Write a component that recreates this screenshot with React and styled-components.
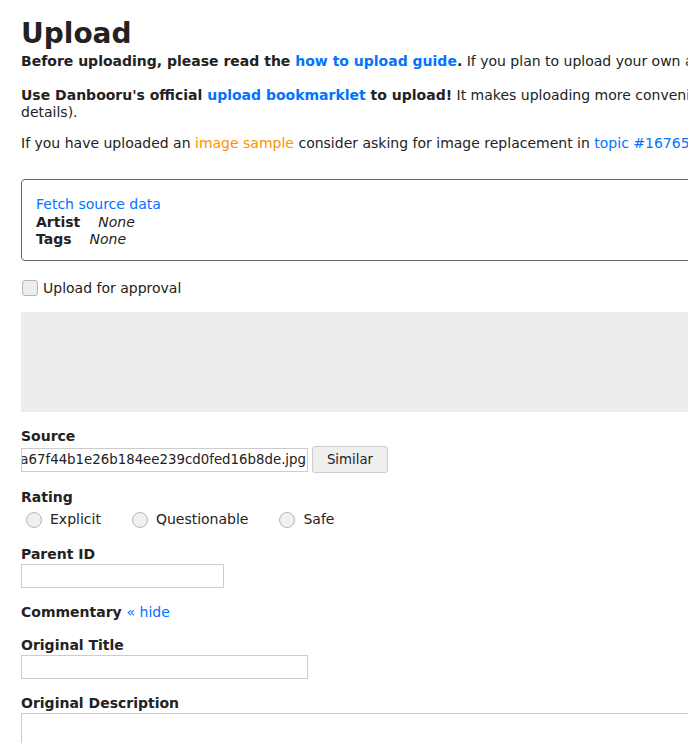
import styled, { createGlobalStyle } from "styled-components";

const GlobalStyle = createGlobalStyle`
    html, body {
        margin: 0;
        padding: 0;
        overflow: hidden;
        background: #fff;
    }
    body {
        font-family: "DejaVu Sans", Verdana, sans-serif;
        font-size: 14px;
        line-height: 18px;
        color: #222;
    }
`

const Page = styled.div`
    width: 1400px;
    padding: 0 21px 40px;
`

const Title = styled.h1`
    font-size: 28px;
    line-height: 34px;
    font-weight: bold;
    margin: 17px 0 0;
    color: #222;
`

const Notice = styled.p`
    margin: ${(props) => props.$top}px 0 0;
    line-height: 17px;
    white-space: nowrap;
`

const Link = styled.a`
    color: ${(props) => (props.$orange ? "#fd9200" : "#0073ff")};
    text-decoration: none;
    cursor: pointer;
`

const SourceBox = styled.div`
    margin-top: 27px;
    border: 1px solid #666;
    border-radius: 4px;
    height: 82px;
    padding: 16px 14px 0;
    box-sizing: border-box;
    line-height: 17.5px;
`

const MetaRow = styled.div`
    display: flex;
    gap: 18px;
`

const CheckRow = styled.label`
    display: flex;
    align-items: center;
    gap: 5px;
    height: 18px;
    margin-top: 18px;
`

const Check = styled.span`
    width: 14px;
    height: 14px;
    border: 1px solid #b5b5b5;
    border-radius: 3px;
    background: #ececec;
    margin-left: 1px;
`

const Preview = styled.div`
    margin-top: 15px;
    height: 100px;
    background: #ededed;
`

const Field = styled.div`
    margin-top: 15px;
`

const Label = styled.div`
    font-weight: bold;
    line-height: 18px;

    a {
        font-weight: normal;
    }
`

const InputRow = styled.div`
    display: flex;
    align-items: center;
    gap: 4px;
    margin-top: 1px;
`

const TextInput = styled.div`
    width: ${(props) => props.$w}px;
    height: ${(props) => props.$h || 24}px;
    margin-top: ${(props) => (props.$inRow ? 0 : 1)}px;
    border: 1px solid #ccc;
    box-sizing: border-box;
    background: #fff;
    overflow: hidden;
`

const SourceText = styled.div`
    display: flex;
    justify-content: flex-end;
    height: 100%;
    padding-right: 1px;
    font-size: 13.333px;
    line-height: 22px;
    white-space: nowrap;
`

const Button = styled.button`
    font-family: "DejaVu Sans", Verdana, sans-serif;
    font-size: 13.333px;
    height: 27px;
    width: 76px;
    padding: 0;
    border: 1px solid #ccc;
    border-radius: 3px;
    background: #efefef;
    color: #222;
`

const RadioGroup = styled.div`
    display: flex;
    align-items: center;
    height: 22px;
    margin-top: 2px;
    padding-left: 5px;
    line-height: 17px;
`

const RadioItem = styled.label`
    display: flex;
    align-items: center;
    gap: 8px;
    margin-right: 31px;
`

const Radio = styled.span`
    width: 14px;
    height: 14px;
    margin-top: 1px;
    border-radius: 50%;
    border: 1px solid #b5b5b5;
    background: #f0f0f0;
`

export default function App() {
    return (
        <Page>
            <GlobalStyle />
            <Title>Upload</Title>
            <Notice $top={2}>
                <strong>Before uploading, please read the <Link>how to upload guide</Link>.</strong> If you plan to upload your own artwork, please read the artist commentary guidelines first.
            </Notice>
            <Notice $top={17}>
                <strong>Use Danbooru's official <Link>upload bookmarklet</Link> to upload!</strong> It makes uploading more convenient and automatically fills in the source (see the wiki for more<br />details).
            </Notice>
            <Notice $top={14}>
                If you have uploaded an <Link $orange>image sample</Link> consider asking for image replacement in <Link>topic #16765</Link>.
            </Notice>

            <SourceBox>
                <Link>Fetch source data</Link>
                <MetaRow>
                    <strong>Artist</strong>
                    <em>None</em>
                </MetaRow>
                <MetaRow>
                    <strong>Tags</strong>
                    <em>None</em>
                </MetaRow>
            </SourceBox>

            <CheckRow>
                <Check />
                Upload for approval
            </CheckRow>

            <Preview />

            <Field>
                <Label>Source</Label>
                <InputRow>
                    <TextInput $w={287} $inRow>
                        <SourceText>https://i.pximg.net/img-original/img/a67f44b1e26b184ee239cd0fed16b8de.jpg</SourceText>
                    </TextInput>
                    <Button>Similar</Button>
                </InputRow>
            </Field>

            <Field>
                <Label>Rating</Label>
                <RadioGroup>
                    <RadioItem><Radio />Explicit</RadioItem>
                    <RadioItem><Radio />Questionable</RadioItem>
                    <RadioItem><Radio />Safe</RadioItem>
                </RadioGroup>
            </Field>

            <Field>
                <Label>Parent ID</Label>
                <TextInput $w={203} />
            </Field>

            <Field>
                <Label>Commentary <Link>« hide</Link></Label>
            </Field>

            <Field>
                <Label>Original Title</Label>
                <TextInput $w={287} />
            </Field>

            <Field>
                <Label>Original Description</Label>
                <TextInput $w={1000} $h={80} />
            </Field>
        </Page>
    );
}
